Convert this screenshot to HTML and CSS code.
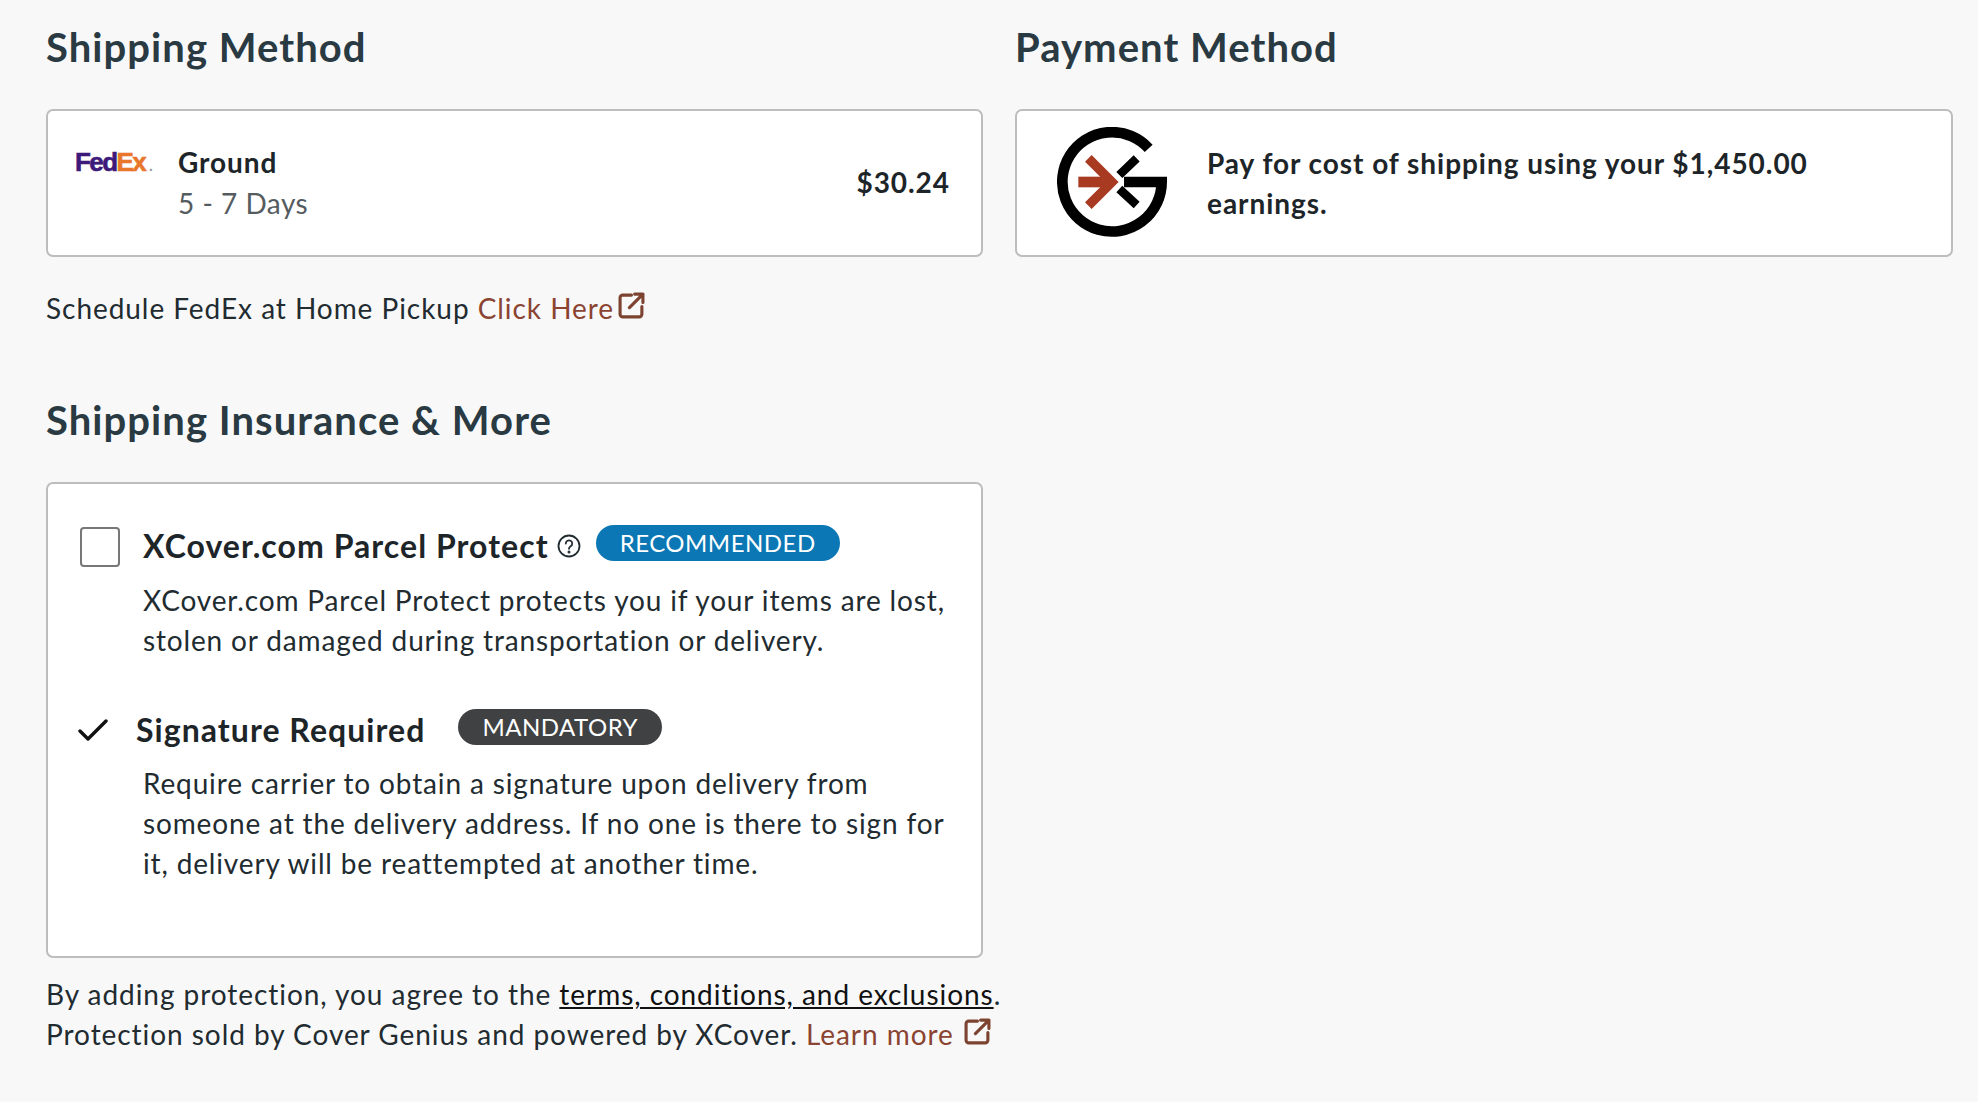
FILE: index.html
```html
<!DOCTYPE html>
<html lang="en">
<head>
<meta charset="utf-8">
<title>Checkout</title>
<link rel="stylesheet" href="styles.css">
</head>
<body>
<main class="page">
  <section class="col">
    <h2 class="heading">Shipping Method</h2>
    <div class="card ship-card">
      <div class="fedex"><span class="fed">Fed</span><span class="ex">Ex</span><span class="reg">.</span></div>
      <div class="ship-info">
        <div class="strong ship-name">Ground</div>
        <div class="muted">5 - 7 Days</div>
      </div>
      <div class="strong price">$30.24</div>
    </div>
    <p class="note">Schedule FedEx at Home Pickup <a class="link">Click Here<svg class="ext" viewBox="0 0 26 26" fill="none" stroke="currentColor" stroke-width="3" stroke-linecap="round" stroke-linejoin="round"><path d="M13 3H4.500A2.500 2.500 0 0 0 2 5.500V21.500A2.500 2.500 0 0 0 4.500 24H20.500A2.500 2.500 0 0 0 23 21.500V14"/><path d="M11 15L24 2M16 2H24V10"/></svg></a></p>
    <h2 class="heading heading-ins">Shipping Insurance &amp; More</h2>
    <div class="card ins-card">
      <div class="ins-row">
        <span class="checkbox"></span>
        <span class="strong ins-title">XCover.com Parcel Protect</span>
        <svg class="help" viewBox="0 0 24 24" fill="none" stroke="#212b30" stroke-width="1.800"><circle cx="12" cy="12" r="10.500"/><path d="M8.800 9.500a3.200 3.200 0 1 1 4.800 2.800c-1 .6-1.600 1.200-1.600 2.500" stroke-linecap="round"/><circle cx="12" cy="18" r=".6" fill="#212b30"/></svg>
        <span class="badge badge-blue">RECOMMENDED</span>
      </div>
      <p class="desc">XCover.com Parcel Protect protects you if your items are lost, stolen or damaged during transportation or delivery.</p>
      <div class="ins-row ins-row-sig">
        <svg class="check" viewBox="0 0 30 24" fill="none" stroke="#111" stroke-width="3.400" stroke-linecap="round" stroke-linejoin="round"><path d="M2 13L10 21L28 3"/></svg>
        <span class="strong sig-title">Signature Required</span>
        <span class="badge badge-dark">MANDATORY</span>
      </div>
      <p class="desc desc-sig">Require carrier to obtain a signature upon delivery from someone at the delivery address. If no one is there to sign for it, delivery will be reattempted at another time.</p>
    </div>
    <p class="foot">By adding protection, you agree to the <a class="terms">terms, conditions, and exclusions</a>.<br>Protection sold by Cover Genius and powered by XCover. <a class="link">Learn more<svg class="ext" viewBox="0 0 26 26" fill="none" stroke="currentColor" stroke-width="3" stroke-linecap="round" stroke-linejoin="round"><path d="M13 3H4.500A2.500 2.500 0 0 0 2 5.500V21.500A2.500 2.500 0 0 0 4.500 24H20.500A2.500 2.500 0 0 0 23 21.500V14"/><path d="M11 15L24 2M16 2H24V10"/></svg></a></p>
  </section>
  <section class="col">
    <h2 class="heading">Payment Method</h2>
    <div class="card pay-card">
      <svg class="glogo" viewBox="21 21 330 330" fill="none">
        <path d="M296 85A149 149 0 1 0 335 186H222" stroke="#000" stroke-width="32"/>
        <path d="M260 115L208 165M208 207L260 255" stroke="#000" stroke-width="26"/>
        <path d="M85 186H180" stroke="#a93a22" stroke-width="32"/>
        <path d="M115 115L186 186L115 257" stroke="#a93a22" stroke-width="28"/>
      </svg>
      <p class="strong pay-text">Pay for cost of shipping using your $1,450.00 earnings.</p>
    </div>
  </section>
</main>
</body>
</html>
```
FILE: styles.css
```css
* { box-sizing: border-box; }
html, body { margin: 0; }
body {
  background: #f8f8f9;
  color: #212b30;
  font-family: Lato, "Noto Sans", sans-serif;
  font-size: 28px;
  line-height: 40px;
  letter-spacing: 0.95px;
}
.page {
  display: grid;
  grid-template-columns: 937px 938px;
  column-gap: 32px;
  padding: 24px 0 0 46px;
}
.heading {
  margin: 0 0 39px;
  height: 46px;
  font-size: 40px;
  line-height: 46px;
  font-weight: 700;
  letter-spacing: 1.05px;
  color: #2a3a42;
}
.card {
  background: #fff;
  border: 2px solid #bdbdbd;
  border-radius: 7px;
}
.strong { font-weight: 700; color: #1d2529; }
.muted { color: #555c60; letter-spacing: 0.5px; }
.ship-card {
  display: flex;
  align-items: center;
  height: 148px;
  padding: 0 31px 0 27px;
}
.fedex {
  align-self: flex-start;
  width: 76px;
  margin: 36px 27px 0 0;
  font-family: "Liberation Sans", sans-serif;
  font-size: 26px;
  line-height: 30px;
  font-weight: 700;
  letter-spacing: -1.6px;
  white-space: nowrap;
  -webkit-text-stroke: 0.6px;
}
.fed { color: #3d1a7a; }
.ex { color: #e8762b; }
.reg { color: #999; font-size: 14px; margin-left: 4px; -webkit-text-stroke: 0; }
.ship-info { flex: 1; }
.ship-name { margin: -1px 0 1px; }
.price { margin: -2px 0 0 auto; }
.note { margin: 31px 0 0; height: 40px; }
.link { color: #8a4431; }
.ext { width: 27px; height: 27px; margin-left: 4px; vertical-align: 0; color: #7c4430; }
.foot .ext { margin-left: 10px; }
.heading-ins { margin-top: 69px; }
.ins-card {
  height: 476px;
  padding: 42px 0 0 32px;
}
.ins-row {
  display: flex;
  align-items: center;
  height: 40px;
}
.checkbox {
  width: 40px;
  height: 40px;
  margin: 2px 23px 0 0;
  background: #fff;
  border: 2px solid #777;
  border-radius: 4px;
}
.ins-title, .sig-title { font-size: 32px; letter-spacing: 1.05px; }
.help { width: 24px; height: 24px; margin-left: 8px; }
.badge {
  display: inline-flex;
  align-items: center;
  height: 36px;
  padding: 0 24px;
  border-radius: 18px;
  color: #fff;
  font-size: 24px;
  letter-spacing: 0.5px;
  position: relative;
  top: -3px;
}
.badge-blue { background: #0b77b4; margin-left: 15px; }
.badge-dark { background: #3f4143; margin-left: 33px; }
.desc {
  margin: 14px 0 0 63px;
  width: 830px;
  letter-spacing: 0.85px;
}
.desc-sig { margin-top: 13px; }
.ins-row-sig { margin-top: 50px; }
.check { width: 30px; height: 24px; margin: 0 28px 0 -2px; }
.foot { margin: 16px 0 0; white-space: nowrap; }
.terms { color: #111; text-decoration: underline; }
.pay-card {
  display: flex;
  align-items: center;
  height: 148px;
  padding: 0 120px 0 40px;
}
.glogo { width: 110px; height: 110px; flex: none; margin: -3px 40px 0 0; }
.pay-text { margin: -1px 0 0; }
```
